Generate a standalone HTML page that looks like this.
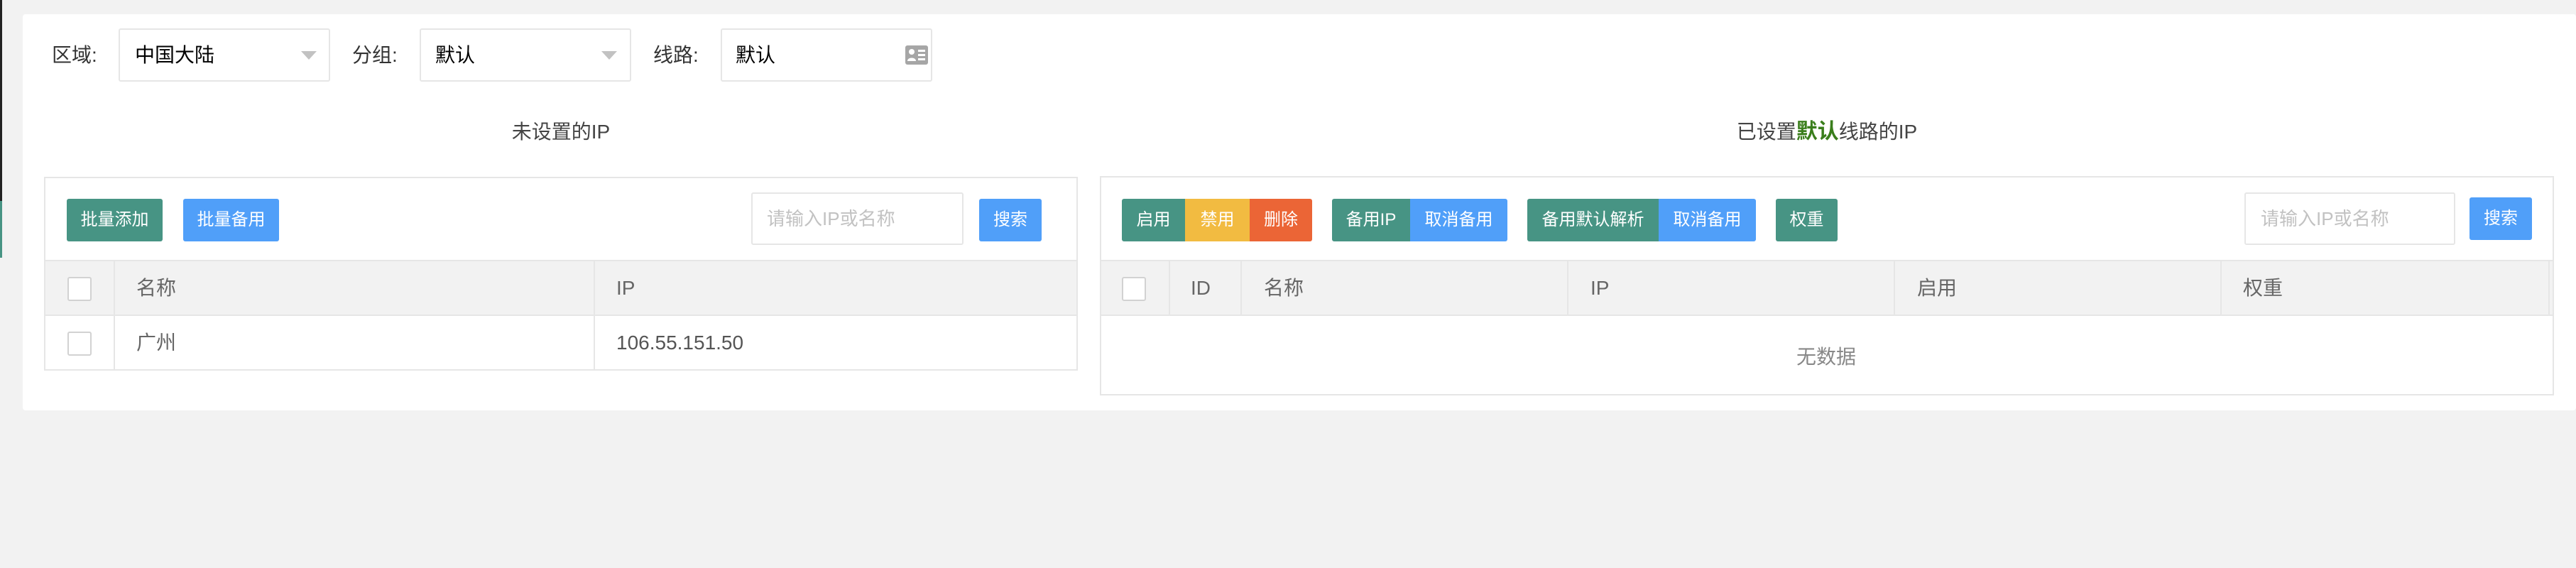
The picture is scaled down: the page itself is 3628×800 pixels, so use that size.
<!DOCTYPE html>
<html><head><meta charset="utf-8"><style>
*{margin:0;padding:0;box-sizing:border-box}
body{width:3628px;height:800px;background:#f2f2f2;position:relative;overflow:hidden;font-family:"Liberation Sans","Noto Sans CJK SC",sans-serif;color:#333}
.a{position:absolute}
.panel{left:32px;top:20px;width:3596px;height:558px;background:#fff;border-radius:4px}
.lbl{font-size:28px;color:#333;line-height:30px}
.inp{border:2px solid #e6e6e6;border-radius:3px;background:#fff}
.val{font-size:28px;color:#000;line-height:30px}
.tri{width:0;height:0;border-left:11px solid transparent;border-right:11px solid transparent;border-top:12px solid #c2c2c2}
.btn{color:#fff;font-size:24px;line-height:60px;text-align:center;height:60px;top:280px}
.teal{background:#479484}.blue{background:#509ff9}.yel{background:#f2bb41}.org{background:#eb6536}
.box{border:2px solid #e6e6e6;background:#fff}
.hd{background:#f2f2f2;border-top:2px solid #e6e6e6;border-bottom:2px solid #e6e6e6}
.vl{width:2px;background:#e6e6e6}
.cb{width:34px;height:34px;border:2px solid #d2d2d2;border-radius:3px;background:#fff}
.th{font-size:28px;color:#666;line-height:30px}
.ph{font-size:26px;color:#c2c2c2;line-height:30px}
</style></head><body>
<div class="a" style="left:0;top:0;width:3px;height:363px;background:#222"></div>
<div class="a" style="left:0;top:283px;width:3px;height:80px;background:#479484"></div>
<div class="a panel"></div>

<div class="a lbl" style="left:73px;top:63px">区域:</div>
<div class="a inp" style="left:167px;top:40px;width:298px;height:75px"></div>
<div class="a val" style="left:190px;top:63px">中国大陆</div>
<div class="a tri" style="left:424px;top:72px"></div>
<div class="a lbl" style="left:496px;top:63px">分组:</div>
<div class="a inp" style="left:591px;top:40px;width:298px;height:75px"></div>
<div class="a val" style="left:613px;top:63px">默认</div>
<div class="a tri" style="left:847px;top:72px"></div>
<div class="a lbl" style="left:920px;top:63px">线路:</div>
<div class="a inp" style="left:1015px;top:40px;width:298px;height:75px"></div>
<div class="a val" style="left:1036px;top:63px">默认</div>
<svg class="a" style="left:1275px;top:64px" width="32" height="27" viewBox="0 0 32 27"><rect width="32" height="27" rx="3" fill="#a6a6a6"/><circle cx="9" cy="9" r="4" fill="#fff"/><path d="M3 22c0-6 12-6 12 0z" fill="#fff"/><rect x="18" y="6" width="10" height="3" fill="#fff"/><rect x="18" y="12" width="10" height="3" fill="#fff"/><rect x="18" y="18" width="10" height="3" fill="#fff"/></svg>

<div class="a lbl" style="left:600px;top:171px;width:380px;text-align:center;color:#444">未设置的IP</div>
<div class="a lbl" style="left:2420px;top:171px;width:306px;text-align:center;color:#444">已设置<b style="color:#3a7e1c;font-size:30px">默认</b>线路的IP</div>

<!-- left box -->
<div class="a box" style="left:62px;top:249px;width:1456px;height:273px"></div>
<div class="a btn teal" style="left:94px;width:135px;border-radius:3px">批量添加</div>
<div class="a btn blue" style="left:258px;width:135px;border-radius:3px">批量备用</div>
<div class="a inp" style="left:1058px;top:271px;width:299px;height:74px"></div>
<div class="a ph" style="left:1080px;top:293px">请输入IP或名称</div>
<div class="a btn blue" style="left:1379px;width:88px;border-radius:3px">搜索</div>
<div class="a hd" style="left:64px;top:366px;width:1452px;height:79px"></div>
<div class="a vl" style="left:160px;top:366px;height:155px"></div>
<div class="a vl" style="left:836px;top:366px;height:155px"></div>
<div class="a cb" style="left:95px;top:390px"></div>
<div class="a th" style="left:192px;top:391px">名称</div>
<div class="a th" style="left:868px;top:391px">IP</div>
<div class="a cb" style="left:95px;top:467px"></div>
<div class="a th" style="left:192px;top:468px">广州</div>
<div class="a th" style="left:868px;top:468px;color:#555">106.55.151.50</div>

<!-- right box -->
<div class="a box" style="left:1549px;top:248px;width:2048px;height:309px"></div>
<div class="a btn teal" style="left:1580px;width:89px;border-radius:3px 0 0 3px">启用</div>
<div class="a btn yel" style="left:1669px;width:91px">禁用</div>
<div class="a btn org" style="left:1760px;width:88px;border-radius:0 3px 3px 0">删除</div>
<div class="a btn teal" style="left:1876px;width:110px;border-radius:3px 0 0 3px">备用IP</div>
<div class="a btn blue" style="left:1986px;width:137px;border-radius:0 3px 3px 0">取消备用</div>
<div class="a btn teal" style="left:2151px;width:185px;border-radius:3px 0 0 3px">备用默认解析</div>
<div class="a btn blue" style="left:2336px;width:137px;border-radius:0 3px 3px 0">取消备用</div>
<div class="a btn teal" style="left:2501px;width:87px;border-radius:3px">权重</div>
<div class="a inp" style="left:3161px;top:271px;width:297px;height:74px"></div>
<div class="a ph" style="left:3184px;top:293px">请输入IP或名称</div>
<div class="a btn blue" style="left:3478px;width:88px;top:278px;border-radius:3px">搜索</div>
<div class="a hd" style="left:1551px;top:366px;width:2044px;height:79px"></div>
<div class="a vl" style="left:1646px;top:366px;height:79px"></div>
<div class="a vl" style="left:1747px;top:366px;height:79px"></div>
<div class="a vl" style="left:2207px;top:366px;height:79px"></div>
<div class="a vl" style="left:2667px;top:366px;height:79px"></div>
<div class="a vl" style="left:3127px;top:366px;height:79px"></div>
<div class="a vl" style="left:3589px;top:366px;height:79px"></div>
<div class="a cb" style="left:1580px;top:390px"></div>
<div class="a th" style="left:1677px;top:391px">ID</div>
<div class="a th" style="left:1780px;top:391px">名称</div>
<div class="a th" style="left:2240px;top:391px">IP</div>
<div class="a th" style="left:2700px;top:391px">启用</div>
<div class="a th" style="left:3159px;top:391px">权重</div>
<div class="a th" style="left:2472px;top:488px;width:200px;text-align:center;color:#888">无数据</div>
</body></html>
